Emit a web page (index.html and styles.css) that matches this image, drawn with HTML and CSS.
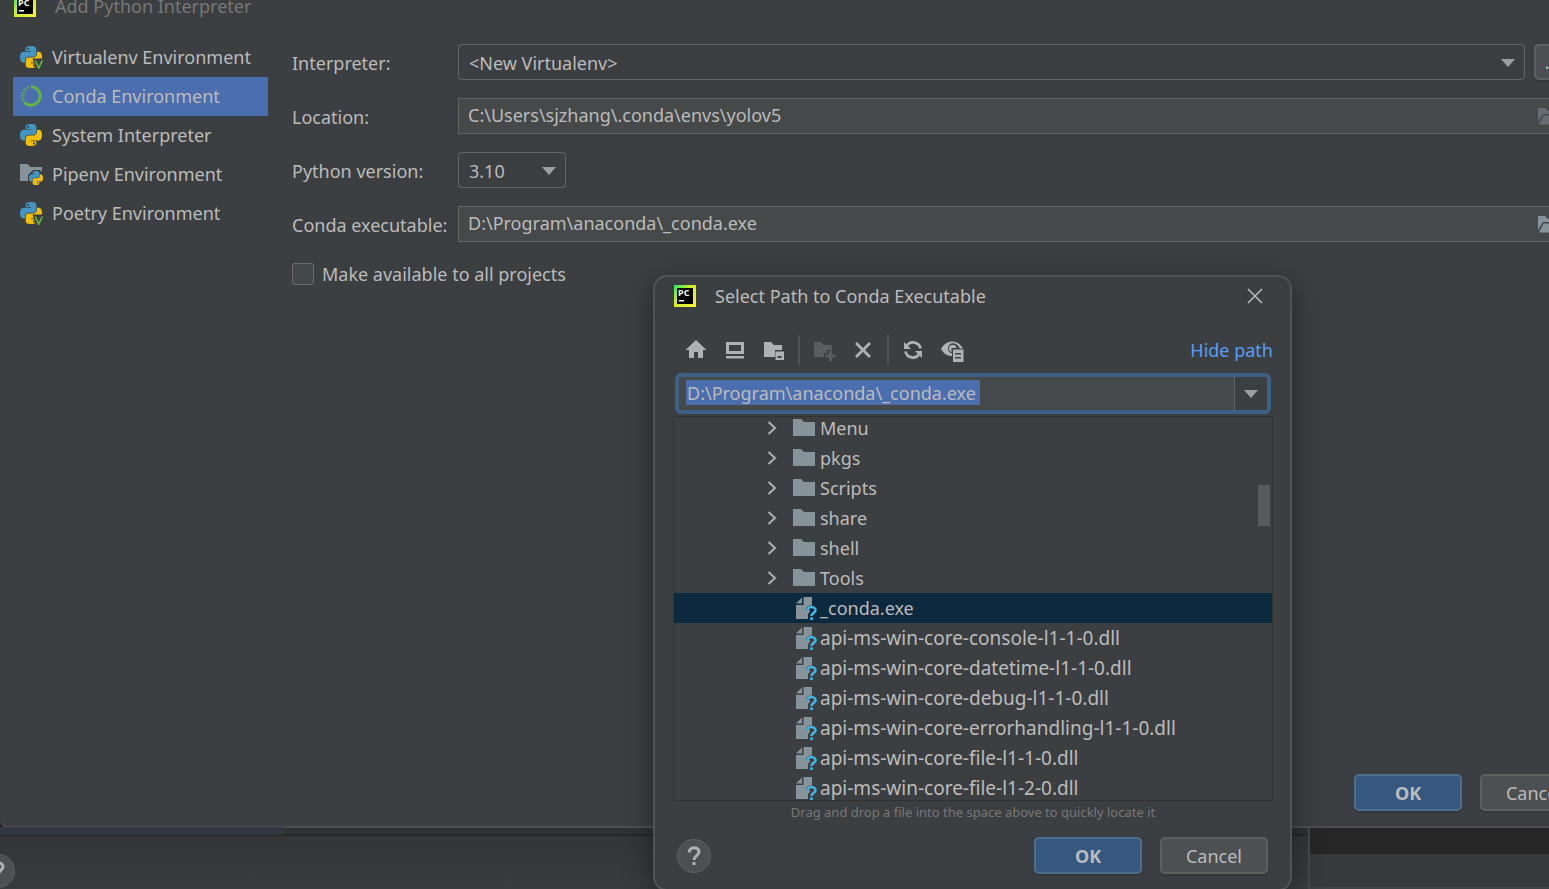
FILE: index.html
```
<!DOCTYPE html>
<html lang="en">
<head>
    <meta charset="UTF-8">
    <meta name="viewport" content="width=device-width, initial-scale=1.0">
    <title>Add Python Interpreter</title>
    <link rel="stylesheet" href="styles.css">
</head>
<body>
    <!-- shared icons -->
    <svg class="sprite" aria-hidden="true">
        <defs>
            <linearGradient id="pcGradient" x1="0" y1="0" x2="1" y2="1">
                <stop offset="0" stop-color="#21e769"/>
                <stop offset="0.4" stop-color="#c9ec2f"/>
                <stop offset="1" stop-color="#fcf035"/>
            </linearGradient>
        </defs>
        <symbol id="pycharm" viewBox="0 0 22 22">
            <rect width="22" height="22" fill="url(#pcGradient)"/>
            <rect x="3" y="3" width="16" height="16" fill="#000"/>
            <text x="4" y="11" class="pc-text">PC</text>
            <rect x="5" y="15" width="5" height="1.5" fill="#fff"/>
        </symbol>
        <symbol id="python" viewBox="0 0 111 111">
            <path fill="#4296c4" d="M54.92 0C50.34.02 45.96.41 42.1 1.09 30.76 3.1 28.7 7.3 28.7 15.03v10.22h26.81v3.41H18.64c-7.79 0-14.62 4.68-16.75 13.59-2.46 10.21-2.57 16.59 0 27.25 1.91 7.94 6.46 13.59 14.25 13.59h9.22V70.84c0-8.85 7.66-16.66 16.75-16.66h26.78c7.46 0 13.41-6.14 13.41-13.62V15.03c0-7.27-6.13-12.73-13.41-13.94C64.28.33 59.5-.02 54.92 0zM40.42 8.22c2.77 0 5.03 2.3 5.03 5.12 0 2.82-2.26 5.1-5.03 5.1-2.78 0-5.03-2.28-5.03-5.1 0-2.83 2.25-5.12 5.03-5.12z"/>
            <path fill="#f0bd0a" d="M85.64 28.66v11.91c0 9.23-7.83 17-16.75 17H42.1c-7.33 0-13.4 6.28-13.4 13.62v25.53c0 7.27 6.32 11.54 13.4 13.63 8.49 2.49 16.63 2.94 26.79 0 6.75-1.96 13.41-5.89 13.41-13.63V86.5H55.51v-3.41h40.19c7.79 0 10.7-5.43 13.41-13.59 2.8-8.4 2.68-16.48 0-27.25-1.93-7.76-5.6-13.59-13.41-13.59H85.64zM70.57 93.31c2.78 0 5.03 2.28 5.03 5.1 0 2.83-2.25 5.12-5.03 5.12-2.77 0-5.03-2.29-5.03-5.12 0-2.82 2.26-5.1 5.03-5.1z"/>
        </symbol>
        <symbol id="python-env" viewBox="0 0 24 24">
            <use href="#python" x="1" y="1" width="22" height="22"/>
            <path d="M13.5 13.5H24V24h-7z" fill="#3c3f41"/>
            <path d="M16.3 15.5 19.7 23l3.6-7.5" fill="none" stroke="#62b543" stroke-width="1.7"/>
        </symbol>
        <symbol id="python-system" viewBox="0 0 24 24">
            <use href="#python" x="1" y="1" width="22" height="22"/>
        </symbol>
        <symbol id="pipenv" viewBox="0 0 24 24">
            <path d="M1 2h7.5l3 3H23v14H1z" fill="#87939a"/>
            <path d="M14 8h7l3 3v13H11l-2-3v-8z" fill="#3c3f41"/>
            <use href="#python" x="10" y="9" width="14" height="14"/>
        </symbol>
        <symbol id="conda" viewBox="0 0 24 24">
            <path d="M12 2.8a9.2 9.2 0 1 1-6.5 15.7" fill="none" stroke="#62b543" stroke-width="3"/>
            <path d="M4.8 17.5A9.2 9.2 0 0 1 10.5 3" fill="none" stroke="#62b543" stroke-width="2.6" stroke-dasharray="1.4 1.3"/>
            <path d="M7 16.6A7 7 0 0 1 10.5 5.2" fill="none" stroke="#62b543" stroke-width="0.9" stroke-dasharray="1 1.8"/>
        </symbol>
        <symbol id="folder" viewBox="0 0 24 24">
            <path d="M1 3h8l3 3h11v14H1z" fill="#87939a"/>
        </symbol>
        <symbol id="folder-open" viewBox="0 0 24 24">
            <path d="M1 4h7l3 3h9v3H6L1 18z" fill="currentColor"/>
            <path d="M6.7 11.500H24l-4 9H2z" fill="currentColor"/>
        </symbol>
        <symbol id="file" viewBox="0 0 24 24">
            <path d="M9.5 1H18v8.5c-3-.4-6 1.500-6 4.500h3.500c1 1 .5 2-1.500 4v5H2V9h7.500z" fill="#87939a"/>
            <path d="M8 1.500V7.500H2z" fill="#87939a"/>
            <path d="M13.500 14.500c0-5 8-4.500 8 0 0 2.500-4 2.300-4 5.500" fill="none" stroke="#40b6e0" stroke-width="2.600"/>
            <rect x="16.100" y="21.300" width="2.800" height="2.700" fill="#40b6e0"/>
        </symbol>
        <symbol id="chevron" viewBox="0 0 10 14">
            <path d="M1.500 1 8 7l-6.500 6" fill="none" stroke="#afb1b3" stroke-width="2"/>
        </symbol>
        <symbol id="arrow" viewBox="0 0 14 8">
            <path d="M0 0h14L7 8z" fill="#9da0a3"/>
        </symbol>
        <symbol id="help" viewBox="0 0 14 20">
            <path d="M2.200 6.500c0-6.500 9.800-6 9.800-.8 0 3.800-5 4-5 8.300" fill="none" stroke="#afb1b3" stroke-width="3"/>
            <rect x="5.500" y="16" width="3" height="3" fill="#afb1b3"/>
        </symbol>
    </svg>

    <!-- settings window at the back -->
    <div class="settings">
        <div class="settings-tree"></div>
        <button class="help settings-help" aria-label="Settings help"><svg><use href="#help"/></svg></button>
    </div>

    <!-- add interpreter -->
    <div class="dialog">
        <div class="dialog-title">
            <svg class="logo"><use href="#pycharm"/></svg>
            <span>Add Python Interpreter</span>
        </div>
        <div class="dialog-body">
            <ul class="env-list">
                <li><svg><use href="#python-env"/></svg>Virtualenv Environment</li>
                <li class="selected"><svg><use href="#conda"/></svg>Conda Environment</li>
                <li><svg><use href="#python-system"/></svg>System Interpreter</li>
                <li><svg><use href="#pipenv"/></svg>Pipenv Environment</li>
                <li><svg><use href="#python-env"/></svg>Poetry Environment</li>
            </ul>
            <form class="env-form">
                <label for="interpreter">Interpreter:</label>
                <div class="row">
                    <div class="select">
                        <select id="interpreter"><option>&lt;New Virtualenv&gt;</option></select>
                        <svg><use href="#arrow"/></svg>
                    </div>
                    <button type="button" class="btn browse">...</button>
                </div>

                <label for="location">Location:</label>
                <div class="path">
                    <input type="text" id="location" value="C:\Users\sjzhang\.conda\envs\yolov5">
                    <svg class="dim"><use href="#folder-open"/></svg>
                </div>

                <label for="version">Python version:</label>
                <div class="select version">
                    <select id="version"><option>3.10</option></select>
                    <svg><use href="#arrow"/></svg>
                </div>

                <label for="executable">Conda executable:</label>
                <div class="path">
                    <input type="text" id="executable" value="D:\Program\anaconda\_conda.exe">
                    <svg><use href="#folder-open"/></svg>
                </div>

                <div class="check">
                    <input type="checkbox" id="available">
                    <label for="available">Make available to all projects</label>
                </div>
            </form>
        </div>
        <div class="dialog-footer">
            <button class="btn primary">OK</button>
            <button class="btn">Cancel</button>
        </div>
    </div>

    <!-- select path -->
    <div class="chooser">
        <div class="chooser-title">
            <svg class="logo"><use href="#pycharm"/></svg>
            <span>Select Path to Conda Executable</span>
            <button class="close" aria-label="Close">
                <svg viewBox="0 0 16 16"><path d="M1 1l14 14M15 1 1 15" fill="none" stroke="#bbb" stroke-width="1.500"/></svg>
            </button>
        </div>
        <div class="toolbar">
            <button aria-label="Home"><svg viewBox="0 0 24 24"><path d="M12 2 1.500 12H5v8h5v-6h4v6h5v-8h3.500z" fill="#afb1b3"/></svg></button>
            <button aria-label="Desktop"><svg viewBox="0 0 24 24"><path d="M3 4h18v12H3zM6 7v6h12V7z" fill="#afb1b3" fill-rule="evenodd"/><path d="M3 18h18v2.500H3z" fill="#afb1b3"/></svg></button>
            <button aria-label="Project"><svg viewBox="0 0 24 24"><path d="M2 4h7l3 3h8v5h-7v7H2z" fill="#afb1b3"/><path d="M14.500 13.500H22V22h-8.500v-8.500zM15.500 18v2h4v-2z" fill="#afb1b3" fill-rule="evenodd"/></svg></button>
            <span class="sep"></span>
            <button aria-label="New folder"><svg viewBox="0 0 24 24"><path d="M2 4h7l3 3h8v5h-5v3h-3v4H2z" fill="#5a5c5d"/><path d="M17 13h3v3.500h3.500v3H20V23h-3v-3.500h-3.500v-3H17z" fill="#5a5c5d"/></svg></button>
            <button aria-label="Delete"><svg viewBox="0 0 24 24"><path d="M5 5l14 14M19 5 5 19" fill="none" stroke="#afb1b3" stroke-width="2.800"/></svg></button>
            <span class="sep"></span>
            <button aria-label="Refresh"><svg viewBox="0 0 24 24"><path d="M5.500 8.500a7.500 7.500 0 0 1 14 2M18.500 15.500a7.500 7.500 0 0 1-14-2" fill="none" stroke="#afb1b3" stroke-width="2.700"/><path d="M3 4v7h7zM21 20v-7h-7z" fill="#afb1b3"/></svg></button>
            <button aria-label="Show hidden files"><svg viewBox="0 0 24 24"><path d="M1 11C6 1 18 1 23 10.500h-3C16 3 8.500 4 8 10.500c0 2.500 1.500 4.500 4 5V18C7 18 3.500 15.500 1 11z" fill="#afb1b3"/><path d="M16.500 10a3.800 3.800 0 1 0-5 4.200V10z" fill="#afb1b3"/><path d="M13 11.500h10.500V24H13zM15 15v1.500h6V15zM15 19v1.500h6V19z" fill="#afb1b3" fill-rule="evenodd"/></svg></button>
            <a href="#" class="hide-path">Hide path</a>
        </div>
        <div class="combo">
            <span class="combo-text"><input type="text" aria-label="Path" value="D:\Program\anaconda\_conda.exe"></span>
            <button aria-label="Recent paths"><svg><use href="#arrow"/></svg></button>
        </div>
        <div class="tree">
            <ul>
                <li class="dir"><svg class="chev"><use href="#chevron"/></svg><svg><use href="#folder"/></svg>Menu</li>
                <li class="dir"><svg class="chev"><use href="#chevron"/></svg><svg><use href="#folder"/></svg>pkgs</li>
                <li class="dir"><svg class="chev"><use href="#chevron"/></svg><svg><use href="#folder"/></svg>Scripts</li>
                <li class="dir"><svg class="chev"><use href="#chevron"/></svg><svg><use href="#folder"/></svg>share</li>
                <li class="dir"><svg class="chev"><use href="#chevron"/></svg><svg><use href="#folder"/></svg>shell</li>
                <li class="dir"><svg class="chev"><use href="#chevron"/></svg><svg><use href="#folder"/></svg>Tools</li>
                <li class="selected"><svg><use href="#file"/></svg>_conda.exe</li>
                <li class="lib"><svg><use href="#file"/></svg>api-ms-win-core-console-l1-1-0.dll</li>
                <li class="lib"><svg><use href="#file"/></svg>api-ms-win-core-datetime-l1-1-0.dll</li>
                <li class="lib"><svg><use href="#file"/></svg>api-ms-win-core-debug-l1-1-0.dll</li>
                <li class="lib"><svg><use href="#file"/></svg>api-ms-win-core-errorhandling-l1-1-0.dll</li>
                <li class="lib"><svg><use href="#file"/></svg>api-ms-win-core-file-l1-1-0.dll</li>
                <li class="lib"><svg><use href="#file"/></svg>api-ms-win-core-file-l1-2-0.dll</li>
            </ul>
            <div class="scroll-thumb"></div>
        </div>
        <p class="hint">Drag and drop a file into the space above to quickly locate it</p>
        <div class="chooser-footer">
            <button class="help" aria-label="Help"><svg><use href="#help"/></svg></button>
            <button class="btn primary">OK</button>
            <button class="btn">Cancel</button>
        </div>
    </div>
</body>
</html>
```
FILE: styles.css
```
*, *::after {
    box-sizing: border-box;
}
body {
    margin: 0;
    height: 100vh;
    overflow: hidden;
    position: relative;
    background: #262626;
    color: #bbb;
    font-family: "Noto Sans", "Noto Sans CJK SC", sans-serif;
    font-size: 18px;
    line-height: 28px;
}
ul {
    list-style: none;
    margin: 0;
    padding: 0;
}
button, input, select {
    font: inherit;
    color: inherit;
    margin: 0;
}
button {
    padding: 0;
    border: none;
    background: none;
}
svg {
    display: block;
    flex: none;
}
.sprite {
    position: absolute;
    width: 0;
    height: 0;
}
.pc-text {
    font: bold 9px "Open Sans", sans-serif;
    fill: #fff;
}
.logo {
    width: 22px;
    height: 22px;
}

/* buttons */
.btn {
    width: 108px;
    height: 37px;
    border: 2px solid #5e6060;
    border-radius: 5px;
    background: #4c5052;
    box-shadow: 0 2px 1px rgba(0, 0, 0, 0.12);
}
.btn.primary {
    border-color: #4c708c;
    background: #365880;
    font-weight: bold;
}
.help {
    display: flex;
    align-items: center;
    justify-content: center;
    width: 34px;
    height: 34px;
    border: 1px solid #5e6060;
    border-radius: 50%;
    background: #4c5052;
}
.help svg {
    width: 14px;
    height: 20px;
}

/* settings window */
.settings {
    position: absolute;
    left: 0;
    right: 0;
    bottom: 0;
    height: 35px;
    background: #37393b;
    border-bottom: 2px solid #404243;
}
.settings::after {
    content: "";
    position: absolute;
    left: 0;
    bottom: -2px;
    width: 1310px;
    height: 62px;
    border-right: 2px solid #474849;
    background: linear-gradient(#2f3132 0, #2f3132 7px, #262829 7px, #262829 9px, #333536 9px, #393c3e 100%);
}
.settings-tree {
    position: absolute;
    z-index: 1;
    left: 0;
    bottom: 52px;
    width: 284px;
    height: 8px;
    background: #323741;
}
.settings-help {
    position: absolute;
    z-index: 1;
    left: -19px;
    bottom: -1px;
}

/* add interpreter */
.dialog {
    position: absolute;
    top: -18px;
    bottom: 61px;
    left: 0;
    width: calc(100% + 56px);
    display: flex;
    flex-direction: column;
    border-bottom: 2px solid #4d4e50;
    border-radius: 0 0 8px 8px;
    background: #3c3f41;
}
.dialog-title {
    display: flex;
    align-items: center;
    gap: 19px;
    height: 47px;
    padding-left: 14px;
    color: #777;
}
.dialog-body {
    flex: 1;
    display: flex;
    gap: 24px;
    padding: 9px 35px 0 13px;
}
.env-list {
    width: 255px;
}
.env-list li {
    display: flex;
    align-items: center;
    gap: 9px;
    height: 39px;
    padding: 0 0 2px 6px;
}
.env-list svg {
    width: 24px;
    height: 24px;
}
.env-list .selected {
    background: #4b6eaf;
}
.env-form {
    flex: 1;
    display: grid;
    grid-template-columns: 148px 1fr;
    grid-auto-rows: 36px;
    column-gap: 18px;
    row-gap: 18px;
    align-items: center;
    padding-top: 6px;
    white-space: nowrap;
}
.env-form > label {
    padding-top: 2px;
}
.row {
    display: flex;
    gap: 9px;
}
.select {
    flex: 1;
    position: relative;
}
.select.version {
    width: 108px;
}
.select select {
    display: block;
    width: 100%;
    height: 36px;
    padding: 2px 10px 0;
    border: 1px solid #646464;
    border-radius: 4px;
    background: #3c3f41;
    appearance: none;
}
.select svg {
    position: absolute;
    right: 10px;
    top: 15px;
    width: 14px;
    height: 8px;
}
.browse {
    width: 36px;
    height: 36px;
}
.path {
    display: flex;
    align-items: center;
    height: 36px;
    padding: 0 8px;
    border: 1px solid #646464;
    background: #45494a;
}
.path input {
    flex: 1;
    height: 28px;
    border: none;
    padding: 0 0 2px 1px;
    background: none;
}
.path svg {
    width: 24px;
    height: 24px;
    color: #87939a;
}
.path .dim {
    opacity: 0.5;
}
.check {
    grid-column: 1 / 3;
    align-self: start;
    display: flex;
    align-items: center;
    gap: 8px;
    height: 28px;
}
.check input {
    width: 22px;
    height: 22px;
    border: 1px solid #6b6b6b;
    border-radius: 3px;
    background: #43494a;
    appearance: none;
}
.dialog-footer {
    display: flex;
    justify-content: flex-end;
    gap: 18px;
    padding: 0 17px 15px 0;
}

/* path chooser */
.chooser {
    position: absolute;
    left: 653px;
    top: 275px;
    width: 639px;
    padding: 0 17px 15px 18px;
    border: 2px solid #505254;
    border-radius: 14px;
    background: #3c3f41;
    box-shadow: 0 8px 30px rgba(0, 0, 0, 0.4);
}
.chooser-title {
    display: flex;
    align-items: center;
    gap: 19px;
    height: 38px;
    padding: 0 10px 0 1px;
}
.close {
    margin-left: auto;
}
.close svg {
    width: 16px;
    height: 16px;
}
.toolbar {
    display: flex;
    align-items: center;
    gap: 15px;
    height: 58px;
    padding: 12px 0 0 11px;
}
.toolbar svg {
    width: 24px;
    height: 24px;
}
.sep {
    width: 2px;
    height: 30px;
    margin: 0 -3px;
    background: #515151;
}
.hide-path {
    margin-left: auto;
    color: #589df6;
    text-decoration: none;
}
.combo {
    display: flex;
    height: 41px;
    margin: 0 2px 2px;
    border: 4px solid #3d6185;
    border-radius: 6px;
    background: #45494a;
}
.combo-text {
    flex: 1;
    display: flex;
    align-items: center;
    padding: 0 0 2px 7px;
}
.combo-text input {
    width: 294px;
    height: 25px;
    padding: 0 0 0 1px;
    border: none;
    background: #4b6eaf;
}
.combo button {
    display: flex;
    align-items: center;
    justify-content: center;
    width: 33px;
    border-left: 1px solid #646464;
    background: #3c3f41;
}
.combo svg {
    width: 14px;
    height: 8px;
}
.tree {
    position: relative;
    height: 385px;
    border: 1px solid #323232;
    overflow: hidden;
}
.tree ul {
    margin-top: -4px;
}
.tree li {
    display: flex;
    align-items: center;
    gap: 2px;
    height: 30px;
    padding-left: 120px;
}
.tree li.dir {
    gap: 4px;
    padding-left: 93px;
}
.tree li.lib {
    font-size: 19px;
}
.tree li svg {
    width: 24px;
    height: 24px;
}
.tree li .chev {
    width: 10px;
    height: 14px;
    margin-right: 11px;
}
.tree .selected {
    background: #0d293e;
}
.scroll-thumb {
    position: absolute;
    right: 2px;
    top: 68px;
    width: 12px;
    height: 41px;
    background: #595b5d;
}
.hint {
    margin: 0;
    text-align: center;
    font-size: 13px;
    line-height: 22px;
    color: #777;
}
.chooser-footer {
    display: flex;
    align-items: center;
    gap: 18px;
    padding: 14px 5px 0 4px;
}
.chooser-footer .help {
    margin-right: auto;
}
```
